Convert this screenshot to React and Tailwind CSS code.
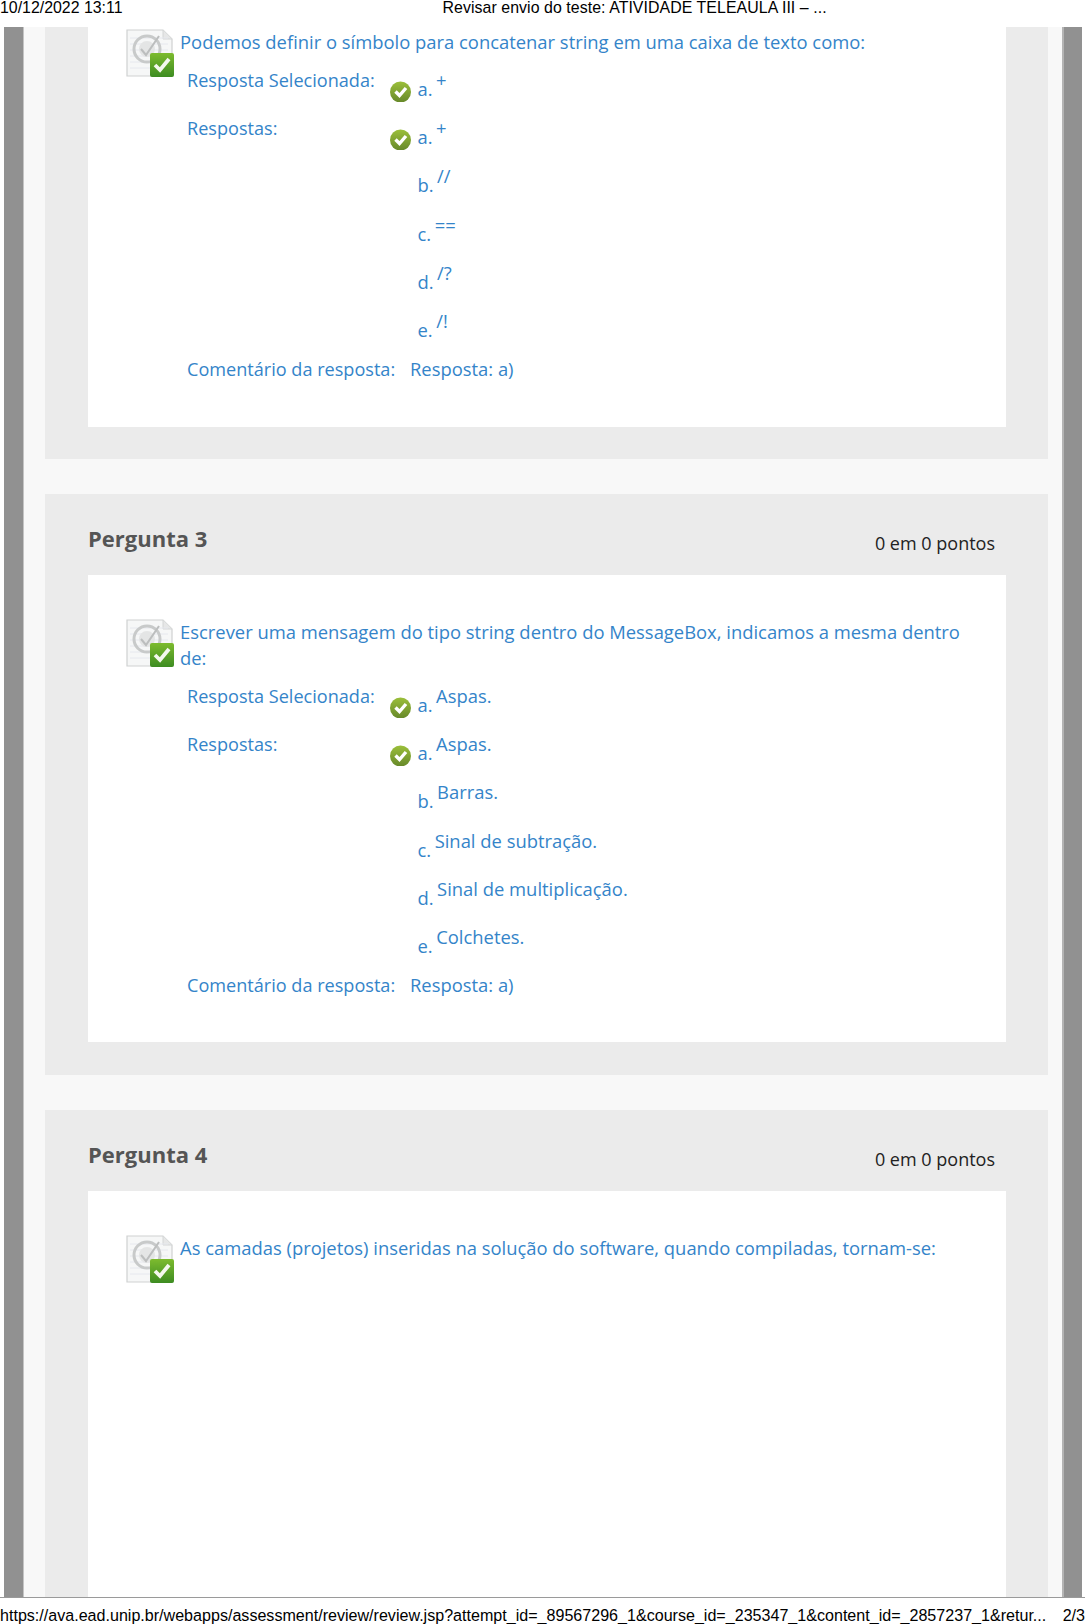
const answers1 = [
  { letter: "a.", text: "+", correct: true },
  { letter: "b.", text: "//" },
  { letter: "c.", text: "==" },
  { letter: "d.", text: "/?" },
  { letter: "e.", text: "/!" },
];

const answers3 = [
  { letter: "a.", text: "Aspas.", correct: true },
  { letter: "b.", text: "Barras." },
  { letter: "c.", text: "Sinal de subtração." },
  { letter: "d.", text: "Sinal de multiplicação." },
  { letter: "e.", text: "Colchetes." },
];

function QuestionIcon() {
  return (
    <svg width="50" height="50" viewBox="0 0 50 50" className="shrink-0 blur-[0.35px]">
      <defs>
        <linearGradient id="badge" x1="0" y1="0" x2="0" y2="1">
          <stop offset="0" stopColor="#7dbb2e" />
          <stop offset="1" stopColor="#3d8c22" />
        </linearGradient>
      </defs>
      <path d="M1 1H37L46 10V47H1Z" fill="#f6f7f7" stroke="#cfd1d1" strokeWidth="1.2" />
      <path d="M37 1V10H46" fill="#e6e7e7" stroke="#d4d6d6" />
      <path d="M4 9H42M4 15H42M4 21H42M4 27H42M4 33H42M4 39H42" stroke="#e6e8ee" strokeWidth="1" />
      <circle cx="21" cy="20" r="13" fill="none" stroke="#c8caca" strokeWidth="3" />
      <circle cx="21" cy="20" r="8" fill="#e4e5e5" />
      <path d="M15 20L20 26L33 7" fill="none" stroke="#bcbebe" strokeWidth="2" />
      <rect x="24" y="24" width="24" height="24" rx="2" fill="url(#badge)" />
      <path d="M29 36L34 41L43 30" fill="none" stroke="#f4f8ee" strokeWidth="3.8" />
    </svg>
  );
}

function CorrectIcon() {
  return (
    <svg width="21" height="21" viewBox="0 0 21 21" className="shrink-0 blur-[0.3px]">
      <defs>
        <linearGradient id="tick" x1="0" y1="0" x2="0" y2="1">
          <stop offset="0" stopColor="#9bbf3a" />
          <stop offset="1" stopColor="#66882a" />
        </linearGradient>
      </defs>
      <circle cx="10.5" cy="11" r="10.5" fill="url(#tick)" />
      <path d="M5.5 10.5L9.5 14.5L16 7" fill="none" stroke="#ffffff" strokeWidth="3.4" />
    </svg>
  );
}

function AnswerRow({ label, answer }) {
  return (
    <div className="flex h-[48.2px]">
      <div className="w-[264px] pl-[61px] leading-[26px] text-[18.1px]">{label}</div>
      <div className="w-[27.5px] pt-[14px]">{answer.correct && <CorrectIcon />}</div>
      <div className="flex">
        <span className="pt-[9px] leading-[26px] mr-[3.5px]">{answer.letter}</span>
        <span className="leading-[26px]">{answer.text}</span>
      </div>
    </div>
  );
}

function Answers({ items }) {
  return (
    <div className="mt-[12px]">
      <AnswerRow label="Resposta Selecionada:" answer={items[0]} />
      {items.map((a, i) => (
        <AnswerRow key={a.letter} label={i === 0 ? "Respostas:" : ""} answer={a} />
      ))}
      <div className="flex leading-[26px] pl-[61px]">
        <span className="w-[223px] text-[18.1px]">Comentário da resposta:</span>
        <span>Resposta: a)</span>
      </div>
    </div>
  );
}

function QuestionHead({ text }) {
  return (
    <div className="flex">
      {/* the icon hangs below the text, the answer rows run up next to it */}
      <div className="h-[26px] w-[50px] shrink-0">
        <QuestionIcon />
      </div>
      <p className="ml-[4px] w-[790px] leading-[26px]">{text}</p>
    </div>
  );
}

function PanelTitle({ title }) {
  return (
    <div className="h-[81px] pl-[43px] pr-[53px] flex justify-between items-center">
      <h2 className="text-[22px] font-bold text-[#555555] mt-[7px]">{title}</h2>
      <span className="text-[18px] text-[#222222] mt-[17px]">0 em 0 pontos</span>
    </div>
  );
}

export default function App() {
  return (
    <div className="w-[1085px] h-[1624px] bg-white flex flex-col overflow-hidden font-['Open_Sans',sans-serif] text-[18.4px] text-[#3484c9]">
      <div className="h-[27px] shrink-0 flex font-['Liberation_Sans',sans-serif] text-[15.9px] leading-[15px] text-black">
        <span>10/12/2022 13:11</span>
        <span className="ml-[320px] tracking-[0.06px]">Revisar envio do teste: ATIVIDADE TELEAULA III – ...</span>
      </div>

      <div className="h-[1570px] shrink-0 flex overflow-hidden">
        <div className="w-[4px]" />
        <div className="w-[20px] bg-[#919191] border-r border-[#c4c4c4]" />
        <div className="w-[1038px] bg-[#f8f8f8] pl-[21px] pr-[14px] flex flex-col gap-[35px]">
          <section className="bg-[#ebebeb] pb-[32px] pl-[43px] pr-[42px]">
            <div className="bg-white h-[400px] pl-[38px] pt-[2px]">
              <QuestionHead text="Podemos definir o símbolo para concatenar string em uma caixa de texto como:" />
              <Answers items={answers1} />
            </div>
          </section>

          <section className="bg-[#ebebeb] pb-[33px]">
            <PanelTitle title="Pergunta 3" />
            <div className="bg-white ml-[43px] mr-[42px] h-[467px] pl-[38px] pt-[44px]">
              <QuestionHead text="Escrever uma mensagem do tipo string dentro do MessageBox, indicamos a mesma dentro de:" />
              <Answers items={answers3} />
            </div>
          </section>

          <section className="bg-[#ebebeb] flex-1">
            <PanelTitle title="Pergunta 4" />
            <div className="bg-white ml-[43px] mr-[42px] h-[500px] pl-[38px] pt-[44px]">
              <QuestionHead text="As camadas (projetos) inseridas na solução do software, quando compiladas, tornam-se:" />
            </div>
          </section>
        </div>
        <div className="w-[20px] bg-[#919191] border-l-2 border-[#b4b4b4]" />
      </div>
      <div className="h-px shrink-0 bg-[#9a9a9a]" />

      <div className="flex-1 flex justify-between items-end font-['Liberation_Sans',sans-serif] text-[16.08px] leading-[18px] text-black whitespace-nowrap">
        <span>https://ava.ead.unip.br/webapps/assessment/review/review.jsp?attempt_id=_89567296_1&amp;course_id=_235347_1&amp;content_id=_2857237_1&amp;retur...</span>
        <span>2/3</span>
      </div>
    </div>
  );
}
